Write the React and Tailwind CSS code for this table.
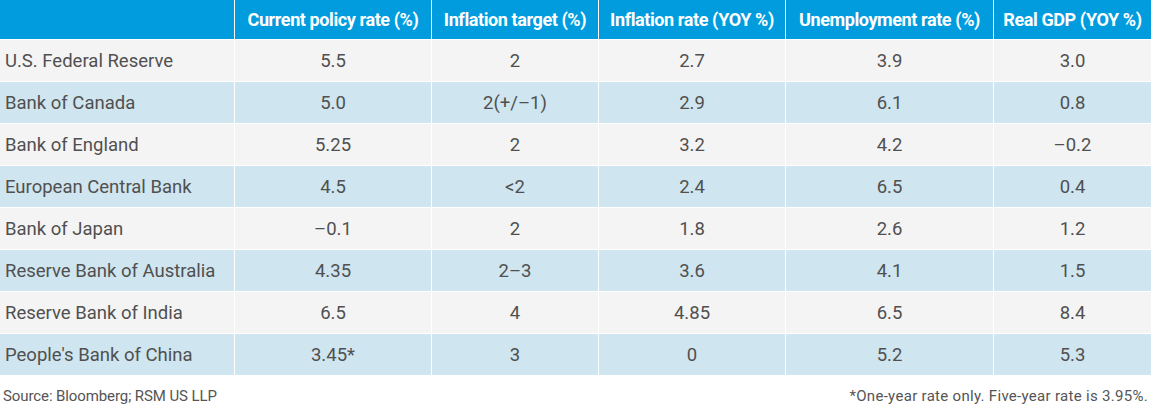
import React from "react";

const headers = [
  "",
  "Current policy rate (%)",
  "Inflation target (%)",
  "Inflation rate (YOY %)",
  "Unemployment rate (%)",
  "Real GDP (YOY %)",
];

const rows = [
  ["U.S. Federal Reserve", "5.5", "2", "2.7", "3.9", "3.0"],
  ["Bank of Canada", "5.0", "2(+/\u20131)", "2.9", "6.1", "0.8"],
  ["Bank of England", "5.25", "2", "3.2", "4.2", "\u20130.2"],
  ["European Central Bank", "4.5", "<2", "2.4", "6.5", "0.4"],
  ["Bank of Japan", "\u20130.1", "2", "1.8", "2.6", "1.2"],
  ["Reserve Bank of Australia", "4.35", "2\u20133", "3.6", "4.1", "1.5"],
  ["Reserve Bank of India", "6.5", "4", "4.85", "6.5", "8.4"],
  ["People's Bank of China", "3.45*", "3", "0", "5.2", "5.3"],
];

export default function App() {
  return (
    <div
      className="w-[1151px] h-[417px] bg-white overflow-hidden"
      style={{ fontFamily: "Roboto, 'Open Sans', sans-serif" }}
    >
      <div className="grid grid-cols-[234px_196px_166px_186px_207px_1fr] gap-px bg-white">
        {headers.map((h, i) => (
          <div
            key={i}
            className="h-[39px] bg-[#009cde] flex items-center justify-center text-white font-bold text-[18px] tracking-[-0.4px]"
          >
            {h}
          </div>
        ))}
        {rows.map((r, ri) =>
          r.map((c, ci) => (
            <div
              key={ri + "-" + ci}
              className={`h-[41px] pt-[2px] flex items-center text-[#505050] text-[18.5px] ${
                ri % 2 === 0 ? "bg-[#f4f4f4]" : "bg-[#cfe5ef]"
              } ${ci === 0 ? "justify-start pl-[5px]" : "justify-center"}`}
            >
              {c}
            </div>
          ))
        )}
      </div>
      <div className="flex justify-between items-center h-[20px] mt-[11px] px-[3px] text-[15px] text-[#555555]">
        <span className="tracking-[-0.1px]">Source: Bloomberg; RSM US LLP</span>
        <span className="tracking-[0.3px]">*One-year rate only. Five-year rate is 3.95%.</span>
      </div>
    </div>
  );
}
